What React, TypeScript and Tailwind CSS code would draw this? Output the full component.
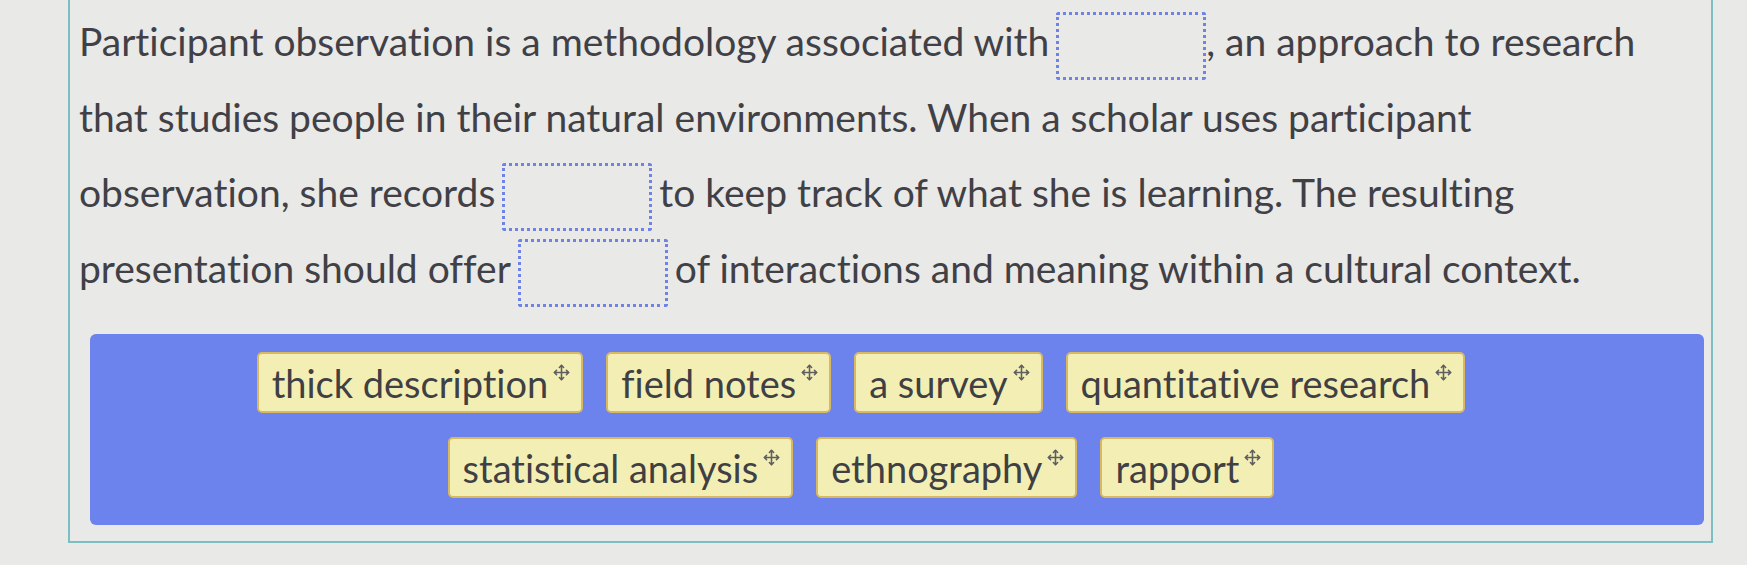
import { Move } from "lucide-react";

const chipsTop = ["thick description", "field notes", "a survey", "quantitative research"];
const chipsBottom = ["statistical analysis", "ethnography", "rapport"];

function Blank() {
  return (
    <span className="mx-[7px] inline-block h-[68px] w-[150px] rounded-[3px] border-[3px] border-dotted border-[#6f82e6] align-middle" />
  );
}

function Chip({ label }: { label: string }) {
  return (
    <div className="flex h-[61px] items-center rounded-[5px] border-2 border-[#d9b862] bg-[#f3efb4] pl-[13px] pr-[11px]">
      <span className="text-[38px] leading-none text-[#3f3f44]">{label}</span>
      <Move className="ml-[5px] mb-[20px] h-[17px] w-[17px] text-[#5e5e60]" strokeWidth={2.2} />
    </div>
  );
}

export default function App() {
  return (
    <div
      className="h-[565px] w-[1747px] overflow-hidden bg-[#e9e9e7] [font-variant-ligatures:none]"
      style={{ fontFamily: "Lato, 'Noto Sans', sans-serif" }}
    >
      <div className="ml-[68px] h-[543px] w-[1645px] border-x-2 border-b-2 border-[#7cbfc3] pt-[4px]">
        {/* Sentence with blanks */}
        <p className="pl-[9px] text-[39px] leading-[75px] text-[#404046]">
          Participant observation is a methodology associated with
          <Blank />
          <span className="-ml-[7px]">, an approach to research</span>
          <br />
          that studies people in their natural environments. When a scholar uses participant
          <br />
          observation, she records
          <Blank />
          to keep track of what she is learning. The resulting
          <br />
          presentation should offer
          <Blank />
          of interactions and meaning within a cultural context.
        </p>

        {/* Word bank */}
        <div className="ml-[20px] mr-[7px] mt-[27px] flex h-[191px] flex-col items-center gap-[24px] rounded-[6px] bg-[#6c82ec] pb-[26px] pr-[72px] pt-[18px]">
          <div className="flex gap-[23px]">
            {chipsTop.map((c) => (
              <Chip key={c} label={c} />
            ))}
          </div>
          <div className="flex gap-[23px]">
            {chipsBottom.map((c) => (
              <Chip key={c} label={c} />
            ))}
          </div>
        </div>
      </div>
    </div>
  );
}
